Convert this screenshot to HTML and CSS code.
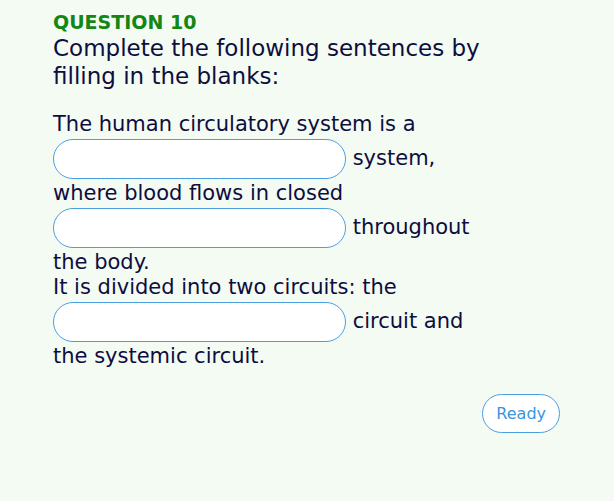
FILE: index.html
```html
<!DOCTYPE html>
<html lang="en">

<head>
  <meta charset="UTF-8" />
  <title>Question 10</title>
  <link rel="stylesheet" href="styles.css">
</head>

<body>
  <!-- Question -->
  <div class="question">
    <h2 class="q-num">QUESTION 10</h2>
    <p class="q-title">Complete the following sentences by filling in the blanks:</p>

    <div class="q-text">
      The human circulatory system is a
      <input type="text" class="blank"> system,
      where blood flows in closed
      <input type="text" class="blank"> throughout
      the body.<br>
      It is divided into two circuits: the
      <input type="text" class="blank"> circuit and
      the systemic circuit.
    </div>
  </div>

  <!-- Actions -->
  <div class="actions">
    <button class="btn-ready">Ready</button>
  </div>
</body>

</html>
```

FILE: styles.css
```css
/* --- Base --- */
body {
  margin: 0;
  background: #f4fbf3;
  font-family: "DejaVu Sans", Verdana, sans-serif;
  color: #0d0d40;
}

.question {
  width: 440px;
  padding: 11px 0 0 53px;
}

.q-num {
  margin: 0;
  font-size: 19px;
  font-weight: bold;
  color: #138613;
  line-height: 23px;
}

.q-title {
  margin: 0 0 22px;
  font-size: 23px;
  line-height: 28px;
}

/* --- Phrases à trous --- */
.q-text {
  font-size: 21px;
  line-height: 25px;
}

.blank {
  width: 293px;
  height: 40px;
  box-sizing: border-box;
  margin: 2px 0;
  border: 1px solid #4a9fe0;
  border-radius: 20px;
  background: #fff;
  vertical-align: middle;
  padding: 0 14px;
  font: inherit;
}

/* --- Bouton --- */
.actions {
  display: flex;
  justify-content: flex-end;
  padding: 25px 54px 0 0;
}

.btn-ready {
  height: 39px;
  padding: 0 13px;
  border: 1px solid #4a9fe0;
  border-radius: 20px;
  background: #fff;
  color: #3a95dc;
  font-family: "DejaVu Sans", Verdana, sans-serif;
  font-size: 16px;
}
```
